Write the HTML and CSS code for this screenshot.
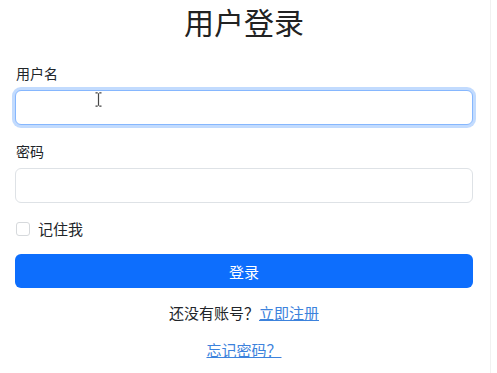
FILE: index.html
```html
<!DOCTYPE html>
<html lang="zh-CN">
<head>
<meta charset="utf-8">
<title>用户登录</title>
<link rel="stylesheet" href="styles.css">
</head>
<body>
<div class="page">
  <main class="login">
    <h2 class="title">用户登录</h2>
    <form class="form">
      <div class="field">
        <label class="label" for="u">用户名</label>
        <div class="input focused" id="u">
          <svg class="caret" width="7" height="15" viewBox="0 0 7 15" aria-hidden="true">
            <path d="M0.5 0.8h2.2M4.3 0.8h2.2M3.5 1.3v12.4M0.5 14.2h2.2M4.3 14.2h2.2" stroke="#444" stroke-width="1.2" fill="none"/>
          </svg>
        </div>
      </div>
      <div class="field">
        <label class="label" for="p">密码</label>
        <div class="input" id="p"></div>
      </div>
      <div class="check">
        <span class="box"></span>
        <span class="check-label">记住我</span>
      </div>
      <button type="button" class="btn">登录</button>
      <p class="reg">还没有账号？<a href="#" class="link">立即注册</a></p>
      <p class="forgot"><a href="#" class="link">忘记密码？</a></p>
    </form>
  </main>
</div>
</body>
</html>
```
FILE: styles.css
```css
* { box-sizing: border-box; }
html, body { margin: 0; padding: 0; background: #fff; }
body {
  font-family: "Microsoft YaHei", "Noto Sans CJK SC", "Noto Sans", sans-serif;
  color: #212529;
  font-size: 15px;
}
.page {
  width: 491px;
  height: 373px;
  border-right: 1px solid #f1f1f1;
}
.login {
  width: 458px;
  margin-left: 15px;
  padding-top: 2px;
}
.title {
  margin: 0;
  text-align: center;
  font-size: 30px;
  font-weight: 400;
  line-height: 38px;
  color: #222;
}
.form { display: flex; flex-direction: column; }
.field { display: flex; flex-direction: column; }
.field:first-child { margin-top: 22px; }
.field + .field { margin-top: 15px; }
.label {
  display: block;
  font-size: 14px;
  line-height: 22px;
  margin-bottom: 6px;
  padding-left: 1px;
}
.input {
  position: relative;
  height: 35px;
  border: 1px solid #dee2e6;
  border-radius: 6px;
  background: #fff;
}
.input.focused {
  border-color: #86b7fe;
  box-shadow: 0 0 0 3px rgba(13, 110, 253, 0.25);
}
.caret {
  position: absolute;
  left: 79px;
  top: 1px;
}
.check {
  display: flex;
  align-items: center;
  gap: 8px;
  margin-top: 18px;
  height: 16px;
}
.box {
  width: 14px;
  height: 14px;
  margin-left: 1px;
  border: 1px solid #d6d9dc;
  border-radius: 3px;
  background: #fff;
}
.check-label { font-size: 15px; line-height: 16px; }
.btn {
  margin-top: 17px;
  height: 34px;
  border: none;
  border-radius: 6px;
  background: #0d6efd;
  color: #fff;
  font-family: inherit;
  font-size: 15px;
}
.reg {
  margin: 14px 0 0;
  text-align: center;
  line-height: 22px;
}
.forgot {
  margin: 15px 0 0;
  text-align: center;
  line-height: 22px;
}
.link { color: #3c82dc; text-decoration: underline; }
```
